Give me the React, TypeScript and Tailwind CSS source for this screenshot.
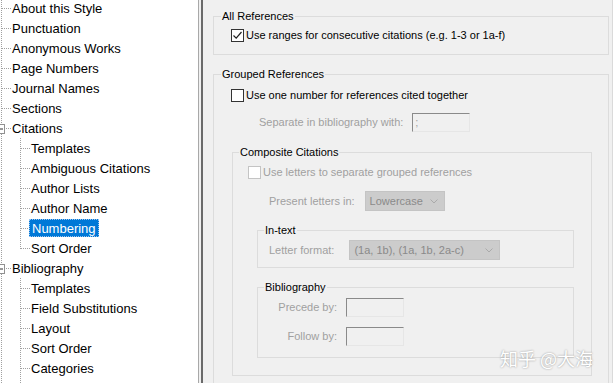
import React from 'react';

interface Node {
  label: string;
  level: 0 | 1;
  open?: boolean;
  last?: boolean;
  selected?: boolean;
}

const nodes: Node[] = [
  { label: 'About this Style', level: 0 },
  { label: 'Punctuation', level: 0 },
  { label: 'Anonymous Works', level: 0 },
  { label: 'Page Numbers', level: 0 },
  { label: 'Journal Names', level: 0 },
  { label: 'Sections', level: 0 },
  { label: 'Citations', level: 0, open: true },
  { label: 'Templates', level: 1 },
  { label: 'Ambiguous Citations', level: 1 },
  { label: 'Author Lists', level: 1 },
  { label: 'Author Name', level: 1 },
  { label: 'Numbering', level: 1, selected: true },
  { label: 'Sort Order', level: 1, last: true },
  { label: 'Bibliography', level: 0, open: true },
  { label: 'Templates', level: 1 },
  { label: 'Field Substitutions', level: 1 },
  { label: 'Layout', level: 1 },
  { label: 'Sort Order', level: 1 },
  { label: 'Categories', level: 1 },
  { label: '', level: 1 },
];

const DOT = '#a0a0a0';

// connector lines of the tree, drawn per row
const Connector = ({ node }: { node: Node }) => {
  if (node.level === 0) {
    return (
      <svg width="11" height="20" className="shrink-0">
        <line x1="1.5" y1="0" x2="1.5" y2="20" stroke={DOT} strokeDasharray="1 1" />
        <line x1="2" y1="10.5" x2="11" y2="10.5" stroke={DOT} strokeDasharray="1 1" />
        {node.open && (
          <g>
            <rect x="-4.5" y="6.5" width="9" height="9" fill="#fff" stroke="#919191" />
            <line x1="0" y1="11" x2="3" y2="11" stroke="#333" />
          </g>
        )}
      </svg>
    );
  }
  return (
    <svg width="30" height="20" className="shrink-0">
      <line x1="1.5" y1="0" x2="1.5" y2="20" stroke={DOT} strokeDasharray="1 1" />
      <line x1="20.5" y1="0" x2="20.5" y2={node.last ? 11 : 20} stroke={DOT} strokeDasharray="1 1" />
      {node.label && <line x1="21" y1="10.5" x2="30" y2="10.5" stroke={DOT} strokeDasharray="1 1" />}
    </svg>
  );
};

const Tree = () => (
  <div className="mt-[-2px] font-['Liberation_Sans',Arial,sans-serif] text-[13px] text-black">
    {nodes.map((n, i) => (
      <div key={i} className="flex h-5 items-center">
        <Connector node={n} />
        {n.selected ? (
          <span className="ml-[-1px] flex h-[18px] items-center border border-dotted border-[#9cc6f0] bg-[#0078d7] px-[2px] leading-none text-white">
            {n.label}
          </span>
        ) : (
          <span className="ml-[1px] whitespace-nowrap leading-none">{n.label}</span>
        )}
      </div>
    ))}
  </div>
);

const CheckBox = ({ checked, disabled }: { checked?: boolean; disabled?: boolean }) => (
  <div
    className={`flex h-[13px] w-[13px] shrink-0 items-center justify-center border bg-white ${
      disabled ? 'border-[#c4c4c4]' : 'border-[#333333]'
    }`}
  >
    {checked && (
      <svg width="11" height="11" viewBox="0 0 11 11">
        <path d="M1.5 5.5 L4.2 8.2 L9.5 2" fill="none" stroke="#222" strokeWidth="1.2" />
      </svg>
    )}
  </div>
);

const TextBox = ({ value }: { value?: string }) => (
  <div className="flex h-[19px] w-[58px] items-center border border-t-[#8a8a8a] border-l-[#8a8a8a] border-r-[#e6e6e6] border-b-[#e6e6e6] bg-[#f0f0f0] pl-[2px] text-[#a0a0a0]">
    {value}
  </div>
);

const Select = ({ value, width }: { value: string; width: string }) => (
  <div className={`flex h-[20px] ${width} items-center justify-between border border-[#c4c4c4] bg-[#cccccc] pl-[4px] pr-[6px] text-[#8a8a8a]`}>
    <span>{value}</span>
    <svg width="8" height="5" viewBox="0 0 8 5">
      <path d="M0.5 0.5 L4 4 L7.5 0.5" fill="none" stroke="#aaaaaa" />
    </svg>
  </div>
);

export default function App() {
  return (
    <div className="relative flex h-[383px] w-[613px] overflow-hidden">
      <div className="w-[198px] shrink-0 overflow-hidden bg-white">
        <Tree />
      </div>
      <div className="w-px bg-[#a8a8a8]" />
      <div className="w-[2px] bg-[#f0f0f0]" />
      <div className="w-[2px] bg-[#6a6a6a]" />

      <div className="flex-1 border-r border-[#dadada] bg-[#f0f0f0] pl-[10px] pr-[3px] pt-[10px] font-['Liberation_Sans',Arial,sans-serif] text-[11px] leading-[13px] text-black">
        <fieldset className="border border-[#dcdcdc] pb-[12px] pl-[17px]">
          <legend className="ml-[-10px] px-[1px]">All References</legend>
          <div className="mt-[6px] flex items-center gap-[2px]">
            <CheckBox checked />
            <span>Use ranges for consecutive citations (e.g. 1-3 or 1a-f)</span>
          </div>
        </fieldset>

        <fieldset className="mt-[13px] border border-[#dcdcdc] pl-[17px] pr-[16px] pb-[20px]">
          <legend className="ml-[-10px] px-[1px]">Grouped References</legend>
          <div className="mt-[8px] flex items-center gap-[2px]">
            <CheckBox />
            <span>Use one number for references cited together</span>
          </div>
          <div className="ml-[28px] mt-[11px] flex items-center gap-[9px] text-[#a0a0a0]">
            <span>Separate in bibliography with:</span>
            <TextBox value=";" />
          </div>

          <fieldset className="ml-[1px] mt-[14px] border border-[#dcdcdc] pl-[15px] pr-[17px] pb-[17px]">
            <legend className="ml-[-9px] px-[1px]">Composite Citations</legend>
            <div className="mt-[7px] flex items-center gap-[2px] text-[#a0a0a0]">
              <CheckBox disabled />
              <span>Use letters to separate grouped references</span>
            </div>
            <div className="ml-[21px] mt-[12px] flex items-center gap-[10px] text-[#a0a0a0]">
              <span>Present letters in:</span>
              <Select value="Lowercase" width="w-[80px]" />
            </div>

            <fieldset className="ml-[9px] mt-[13px] border border-[#dcdcdc] pl-[11px] pb-[7px]">
              <legend className="ml-[-5px] px-[1px]">In-text</legend>
              <div className="mt-[3px] flex items-center gap-[15px] text-[#a0a0a0]">
                <span>Letter format:</span>
                <Select value="(1a, 1b), (1a, 1b, 2a-c)" width="w-[151px]" />
              </div>
            </fieldset>

            <fieldset className="ml-[9px] mt-[13px] border border-[#dcdcdc] pb-[11px]">
              <legend className="ml-[6px] px-[1px]">Bibliography</legend>
              <div className="mt-[4px] flex flex-col gap-[10px] text-[#a0a0a0]">
                <div className="flex items-center gap-[9px]">
                  <span className="w-[79px] text-right">Precede by:</span>
                  <TextBox />
                </div>
                <div className="flex items-center gap-[9px]">
                  <span className="w-[79px] text-right">Follow by:</span>
                  <TextBox />
                </div>
              </div>
            </fieldset>
          </fieldset>
        </fieldset>
      </div>

      <div className="absolute left-[500px] top-[347px] font-['Noto_Sans_CJK_SC',sans-serif] text-[18px] leading-[22px] text-white [text-shadow:0_0_2px_#8a8a8a]">
        知乎 @大海
      </div>
    </div>
  );
}
